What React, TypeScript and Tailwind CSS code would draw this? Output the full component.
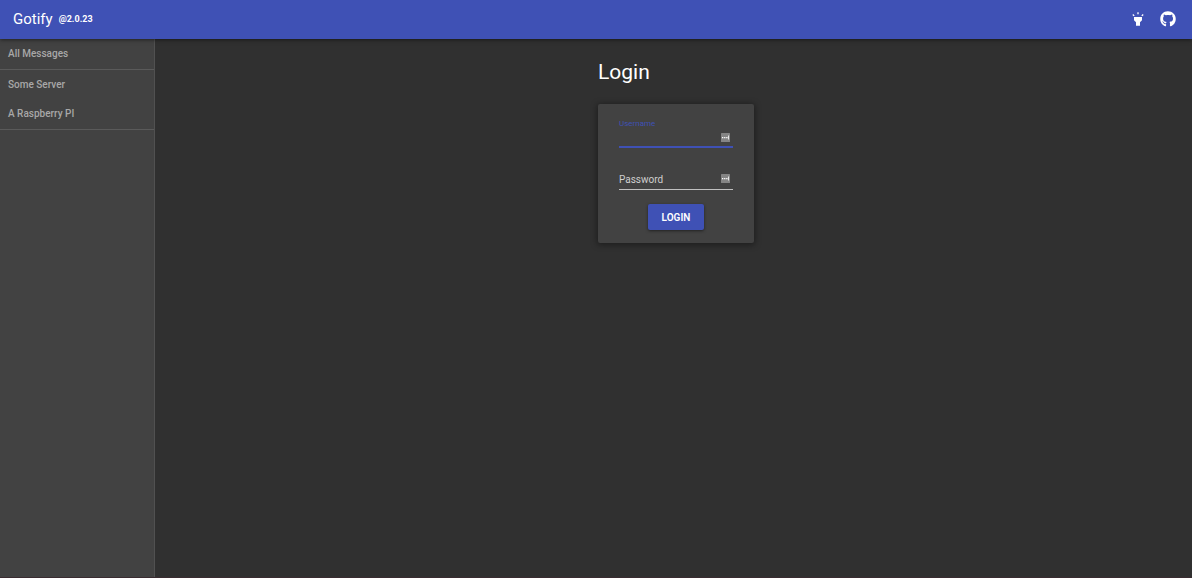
import type { FC } from "react";
import { FaGithub } from "react-icons/fa";
import { MdHighlight } from "react-icons/md";

const GITHUB_URL = "https://github.com/gotify/server";

interface NavItem {
	label: string;
	href: string;
}

const applications: NavItem[] = [
	{ label: "Some Server", href: "#/messages/1" },
	{ label: "A Raspberry PI", href: "#/messages/2" }
];

const Header: FC = () => (
	<header className="relative z-10 flex h-[39px] items-center bg-[#3f51b5] px-[13px] pb-px text-white shadow-[0_1px_4px_rgba(0,0,0,0.5)]">
		<a href="#/" className="flex items-center gap-[6px]">
			<span className="text-[15px] leading-5">Gotify</span>
			<span className="text-[9px] leading-5 font-bold">@2.0.23</span>
		</a>
		<div className="ml-auto flex items-center gap-[14px] pr-[3px]">
			<button type="button" aria-label="Toggle theme">
				<MdHighlight className="size-4" />
			</button>
			<a href={GITHUB_URL} aria-label="GitHub">
				<FaGithub className="size-4" />
			</a>
		</div>
	</header>
);

const NavLink: FC<NavItem> = ({ label, href }) => (
	<a href={href} className="flex h-[30px] items-center px-2 pb-px text-[10px] font-medium text-[#a8a8a8]">
		{label}
	</a>
);

const Sidebar: FC = () => (
	<nav className="w-[155px] shrink-0 border-r border-[#515151] bg-[#424242]">
		<div className="border-b border-[#5a5a5a]">
			<NavLink label="All Messages" href="#/" />
		</div>
		<div className="flex h-[60px] flex-col border-b border-[#5a5a5a]">
			{applications.map((app) => (
				<NavLink key={app.label} {...app} />
			))}
		</div>
	</nav>
);

const FillIcon: FC = () => (
	<svg viewBox="0 0 9 9" className="size-[9px]" aria-hidden="true">
		<rect width="9" height="9" rx="0.6" fill="#858585" />
		<path d="M1 4h1.3v1.3H1zM3.1 4h1.3v1.3H3.1zM5.2 4h1.3v1.3H5.2zM7.2 2.6h.8v3.8h-.8z" fill="#fff" />
	</svg>
);

const LoginForm: FC = () => (
	<form
		onSubmit={(e) => e.preventDefault()}
		className="flex flex-col items-center rounded-[2px] bg-[#424242] px-[21px] pt-[14px] pb-[13px] shadow-[0_1px_6px_1px_rgba(0,0,0,0.4)]">
		<div className="w-full border-b-2 border-[#3f51b5]">
			<label htmlFor="username" className="block text-[8px] leading-3 text-[#3f51b5]">
				Username
			</label>
			<div className="flex h-4 items-start pt-[3px] pr-[3px]">
				<input id="username" type="text" className="h-3 w-0 grow bg-transparent text-[10px] text-white outline-none" />
				<FillIcon />
			</div>
		</div>
		<div className="relative mt-[23px] w-full border-b border-[#c0c0c0]">
			<label htmlFor="password" className="absolute top-0 left-0 text-[10px] leading-[18px] text-[#cfcfcf]">
				Password
			</label>
			<div className="flex h-[18px] items-start pt-[3px] pr-[3px]">
				<input id="password" type="password" className="h-3 w-0 grow bg-transparent text-[10px] text-white outline-none" />
				<FillIcon />
			</div>
		</div>
		<button
			type="submit"
			className="mt-[14px] h-[26px] w-14 rounded-[2px] bg-[#3f51b5] text-[10px] font-semibold text-white uppercase shadow-[0_1px_3px_rgba(0,0,0,0.5)]">
			Login
		</button>
	</form>
);

export default function App() {
	return (
		<div className="flex min-h-screen flex-col border-b border-[#3a2c31] bg-[#303030] font-[Roboto,sans-serif]">
			<Header />
			<div className="flex grow">
				<Sidebar />
				<main className="flex grow justify-center pt-5 pl-[5px]">
					<div className="w-[156px]">
						<h1 className="mb-[19px] text-[21px] leading-[26px] text-white">Login</h1>
						<LoginForm />
					</div>
				</main>
			</div>
		</div>
	);
}
